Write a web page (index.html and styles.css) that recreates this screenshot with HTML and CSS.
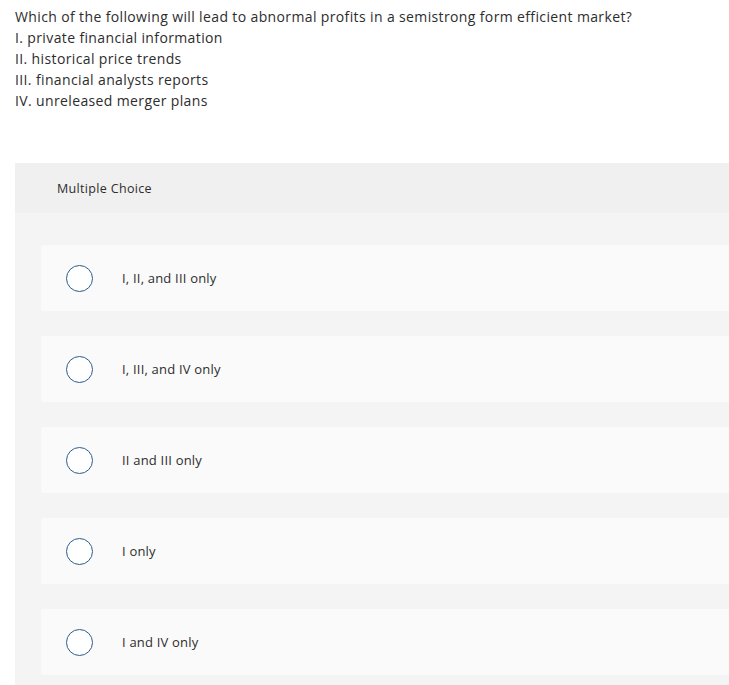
FILE: index.html
```html
<!DOCTYPE html>
<html>
<head>
<meta charset="utf-8">
<link rel="stylesheet" href="styles.css">
</head>
<body>
<div class="page">
  <div class="question">
    <p>Which of the following will lead to abnormal profits in a semistrong form efficient market?</p>
    <p>I. private financial information</p>
    <p>II. historical price trends</p>
    <p>III. financial analysts reports</p>
    <p>IV. unreleased merger plans</p>
  </div>
  <div class="panel">
    <div class="panel-header">Multiple Choice</div>
    <div class="options">
      <div class="option"><span class="radio"></span><span class="label">I, II, and III only</span></div>
      <div class="option"><span class="radio"></span><span class="label">I, III, and IV only</span></div>
      <div class="option"><span class="radio"></span><span class="label">II and III only</span></div>
      <div class="option"><span class="radio"></span><span class="label">I only</span></div>
      <div class="option"><span class="radio"></span><span class="label">I and IV only</span></div>
    </div>
  </div>
</div>
</body>
</html>
```

FILE: styles.css
```css
html, body {
  margin: 0;
  padding: 0;
  background: #fff;
  overflow: hidden;
}
body {
  font-family: "Open Sans", "Lato", sans-serif;
  color: #2d2d2d;
  font-variant-ligatures: none;
}
.page {
  padding: 6px 0 0 15px;
}
.question p {
  margin: 0;
  font-size: 14px;
  line-height: 21px;
  letter-spacing: 0.37px;
}
.panel {
  margin-top: 52px;
  background: #f4f4f4;
  padding-bottom: 10px;
}
.panel-header {
  background: #f0f0f0;
  height: 50px;
  display: flex;
  align-items: center;
  padding-left: 42px;
  font-size: 12.5px;
  letter-spacing: 0.33px;
}
.options {
  padding: 32px 0 0 26px;
  display: flex;
  flex-direction: column;
  gap: 25px;
}
.option {
  background: #fafafa;
  height: 66px;
  border-radius: 3px 0 0 3px;
  display: flex;
  align-items: center;
  padding-left: 25px;
}
.radio {
  width: 25px;
  height: 25px;
  border: 1.5px solid #2b5d8c;
  border-radius: 50%;
  background: #fff;
  flex: none;
}
.label {
  margin-left: 29px;
  font-size: 13px;
  letter-spacing: 0.2px;
}
```
